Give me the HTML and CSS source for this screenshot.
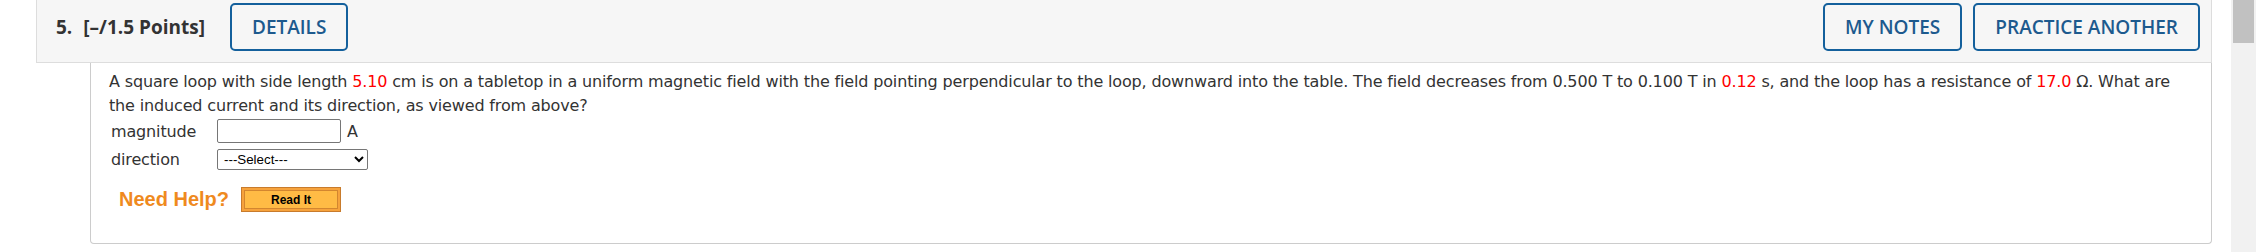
FILE: index.html
```html
<!DOCTYPE html>
<html lang="en">

<head>
    <meta charset="UTF-8">
    <meta name="viewport" content="width=device-width, initial-scale=1.0">
    <title>Question 5</title>
    <link rel="stylesheet" href="styles.css">
</head>

<body>
    <div class="page">
        <div class="question">
            <div class="q-header">
                <span class="q-num">5.</span>
                <span class="q-points">[&ndash;/1.5 Points]</span>
                <button class="btn-outline details">DETAILS</button>
                <div class="q-actions">
                    <button class="btn-outline">MY NOTES</button>
                    <button class="btn-outline">PRACTICE ANOTHER</button>
                </div>
            </div>
            <div class="q-body">
                <p class="q-text">A square loop with side length <span class="val">5.10</span> cm is on a tabletop in a uniform magnetic field with the field pointing perpendicular to the loop, downward into the table. The field decreases from 0.500 T to 0.100 T in <span class="val">0.12</span> s, and the loop has a resistance of <span class="val">17.0</span> &Omega;. What are the induced current and its direction, as viewed from above?</p>
                <div class="answers">
                    <label class="ans-label">magnitude</label>
                    <div class="ans-field">
                        <input type="text" class="ans-input">
                        <span class="unit">A</span>
                    </div>
                    <label class="ans-label">direction</label>
                    <div class="ans-field">
                        <select class="ans-select">
                            <option>---Select---</option>
                        </select>
                    </div>
                </div>
                <div class="help">
                    <span class="help-title">Need Help?</span>
                    <button class="read-it">Read It</button>
                </div>
            </div>
        </div>
    </div>
    <div class="scrollbar">
        <div class="thumb"></div>
    </div>
</body>

</html>
```

FILE: styles.css
```css
body {
    margin: 0;
    display: flex;
    height: 252px;
    overflow: hidden;
    background: #fff;
}

.page {
    flex: 1;
    padding: 0 19px 0 36px;
}

.scrollbar {
    width: 25px;
    background: #f1f1f1;
}

.thumb {
    height: 43px;
    margin: 0 2px;
    background: #c1c1c1;
}

/* header bar */
.q-header {
    display: flex;
    align-items: center;
    background: #f6f6f6;
    border: 1px solid #ddd;
    border-top: none;
    padding: 3px 11px 11px 19px;
    font-family: "Open Sans", sans-serif;
}

.q-num,
.q-points {
    font-size: 19px;
    font-weight: 700;
    color: #333;
}

.q-num {
    margin-right: 11px;
}

.btn-outline {
    height: 48px;
    padding: 0 20px;
    border: 2px solid #14609c;
    border-radius: 5px;
    background: transparent;
    color: #1d5a8e;
    font-family: "Open Sans", sans-serif;
    font-size: 19px;
    font-weight: 600;
}

.details {
    margin-left: 25px;
}

.q-actions {
    margin-left: auto;
    display: flex;
    gap: 11px;
}

/* question body */
.q-body {
    margin-left: 54px;
    border: 1px solid #ccc;
    border-top: none;
    border-radius: 0 0 4px 4px;
    padding: 7px 18px 31px 18px;
    font-family: "DejaVu Sans", sans-serif;
    font-size: 16px;
    letter-spacing: -0.15px;
    color: #333;
}

.q-text {
    margin: 0;
    line-height: 24px;
}

.val {
    color: #f00;
}

.answers {
    margin-top: 1px;
    display: grid;
    grid-template-columns: 108px auto;
    row-gap: 5px;
    align-items: center;
}

.ans-label {
    padding: 2px 0 0 2px;
    line-height: 20px;
}

.ans-field {
    display: flex;
    align-items: center;
}

.ans-input {
    box-sizing: border-box;
    width: 124px;
    height: 24px;
    margin: 0;
    border: 1px solid #767676;
    border-radius: 2px;
}

.unit {
    margin-left: 6px;
}

.ans-select {
    box-sizing: border-box;
    width: 151px;
    height: 21px;
    margin: 0;
    padding: 0 2px;
    border: 1px solid #767676;
    border-radius: 2px;
    background: #fff;
    color: #000;
    font-family: "Liberation Sans", sans-serif;
    font-size: 13.33px;
    letter-spacing: 0;
}

.help {
    margin-top: 17px;
    padding-left: 10px;
    display: flex;
    align-items: center;
    gap: 12px;
    letter-spacing: 0;
}

.help-title {
    font-family: "Liberation Sans", sans-serif;
    font-size: 20px;
    font-weight: 700;
    color: #ef8a1e;
}

.read-it {
    box-sizing: border-box;
    width: 100px;
    height: 25px;
    padding: 0;
    border: 1px solid #c87b2c;
    background: #ffbb45;
    box-shadow: inset 0 0 0 2px #f6a23c, inset 0 0 0 3px #d3862f;
    font-family: "Liberation Sans", sans-serif;
    font-size: 12px;
    font-weight: 700;
    color: #000;
}
```
